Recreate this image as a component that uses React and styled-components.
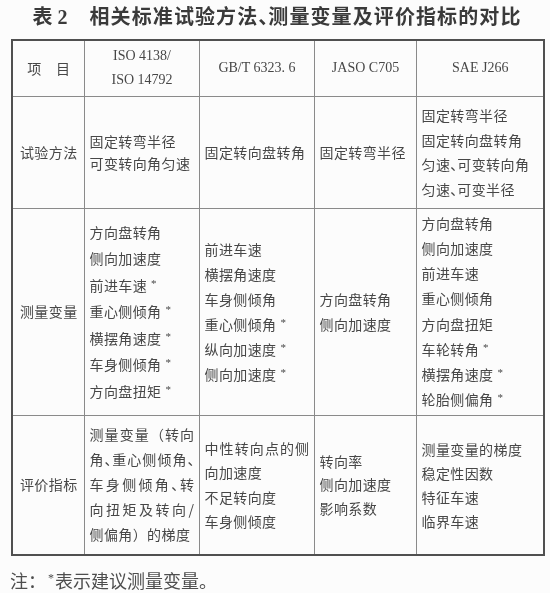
import React from "react"
import styled, { createGlobalStyle } from "styled-components"

const GlobalStyle = createGlobalStyle`
  html, body {
    margin: 0;
    background: #fcfcfa;
  }
  body {
    font-family: "Noto Sans CJK SC", sans-serif;
    color: #474747;
  }
`

// grayscale keeps sub-pixel text rendering from tinting single glyphs
const Page = styled.div`
  width: 550px;
  height: 593px;
  padding: 4px 7px 0 11px;
  box-sizing: border-box;
  background: #fcfcfa;
  filter: grayscale(1);
`

const Title = styled.h1`
  margin: 0 0 10px;
  font-size: 20px;
  line-height: 24px;
  font-weight: 700;
  color: #3a3a3a;
  text-align: center;
  letter-spacing: 1.1px;
`

const TableNo = styled.span`
  margin-right: 22px;
  letter-spacing: 0;
`

const Digit = styled.span`
  font-family: "Liberation Serif", serif;
  margin-left: 5px;
`

const Table = styled.table`
  width: 532px;
  table-layout: fixed;
  border-collapse: collapse;
  border: 2px solid #505050;
  font-size: 14px;
  letter-spacing: 0.4px;
`

const Row = styled.tr`
  height: ${props => props.$h}px;
`

const Cell = styled.td`
  border: 1px solid #8a8a8a;
  padding: 0 4px 0 5px;
  vertical-align: middle;
  text-align: ${props => (props.$center ? "center" : "left")};
  line-height: ${props => props.$lh || 25}px;
  white-space: nowrap;
`

const HeadLatin = styled.div`
  font-family: "Liberation Serif", serif;
  font-size: 14px;
  line-height: 24px;
  letter-spacing: 0;
`

const Line = styled.div`
  ${props =>
    props.$justify &&
    `
    white-space: normal;
    text-align: justify;
    text-align-last: justify;
  `}
`

const Half = styled.span`
  display: inline-block;
  width: 0.5em;
  overflow: hidden;
  vertical-align: top;
`

const Star = styled.span`
  position: relative;
  top: -4px;
  font-family: "Liberation Serif", serif;
  font-size: 11px;
  line-height: 0;
  margin-left: 4px;
`

const Note = styled.p`
  margin: 12px 0 0 -1px;
  font-size: 18px;
  line-height: 24px;
  color: #4e4e4e;
`

const NoteStar = styled.span`
  position: relative;
  top: -6px;
  font-family: "Liberation Serif", serif;
  font-size: 12px;
  line-height: 0;
  margin: 0 1px 0 2px;
`

// "、" is set half-width in the print, "*" marks suggested variables
const renderText = text => {
  const starred = text.endsWith("*")
  const body = starred ? text.slice(0, -1).trim() : text
  const parts = body.split("、")
  return (
    <>
      {parts.map((part, i) => (
        <React.Fragment key={i}>
          {part}
          {i < parts.length - 1 && <Half>、</Half>}
        </React.Fragment>
      ))}
      {starred && <Star>*</Star>}
    </>
  )
}

const rows = [
  {
    label: "试验方法",
    height: 112,
    cells: [
      { lh: 22, lines: ["固定转弯半径", "可变转向角匀速"] },
      { lines: ["固定转向盘转角"] },
      { lines: ["固定转弯半径"] },
      { lh: 24.5, lines: ["固定转弯半径", "固定转向盘转角", "匀速、可变转向角", "匀速、可变半径"] }
    ]
  },
  {
    label: "测量变量",
    height: 207,
    cells: [
      {
        lh: 26.5,
        lines: ["方向盘转角", "侧向加速度", "前进车速 *", "重心侧倾角 *", "横摆角速度 *", "车身侧倾角 *", "方向盘扭矩 *"]
      },
      { lines: ["前进车速", "横摆角速度", "车身侧倾角", "重心侧倾角 *", "纵向加速度 *", "侧向加速度 *"] },
      { lh: 24.5, lines: ["方向盘转角", "侧向加速度"] },
      {
        lh: 25.2,
        lines: ["方向盘转角", "侧向加速度", "前进车速", "重心侧倾角", "方向盘扭矩", "车轮转角 *", "横摆角速度 *", "轮胎侧偏角 *"]
      }
    ]
  },
  {
    label: "评价指标",
    height: 140,
    cells: [
      {
        lines: ["测量变量（转向", "角、重心侧倾角、", "车身侧倾角、转", "向扭矩及转向/", "侧偏角）的梯度"],
        justify: 4
      },
      { lh: 24.6, lines: ["中性转向点的侧", "向加速度", "不足转向度", "车身侧倾度"], justify: 1 },
      { lh: 23.5, lines: ["转向率", "侧向加速度", "影响系数"] },
      { lh: 24, lines: ["测量变量的梯度", "稳定性因数", "特征车速", "临界车速"] }
    ]
  }
]

export default function App() {
  return (
    <Page>
      <GlobalStyle />
      <Title>
        <TableNo>
          表<Digit>2</Digit>
        </TableNo>
        相关标准试验方法<Half>、</Half>测量变量及评价指标的对比
      </Title>
      <Table>
        <colgroup>
          <col style={{ width: 72 }} />
          <col style={{ width: 115 }} />
          <col style={{ width: 115 }} />
          <col style={{ width: 102 }} />
          <col style={{ width: 128 }} />
        </colgroup>
        <tbody>
          <Row $h={56}>
            <Cell $center>项　目</Cell>
            <Cell $center>
              <HeadLatin>ISO 4138/</HeadLatin>
              <HeadLatin>ISO 14792</HeadLatin>
            </Cell>
            <Cell $center>
              <HeadLatin>GB/T 6323. 6</HeadLatin>
            </Cell>
            <Cell $center>
              <HeadLatin>JASO C705</HeadLatin>
            </Cell>
            <Cell $center>
              <HeadLatin>SAE J266</HeadLatin>
            </Cell>
          </Row>
          {rows.map(row => (
            <Row key={row.label} $h={row.height}>
              <Cell $center>{row.label}</Cell>
              {row.cells.map((cell, i) => (
                <Cell key={i} $lh={cell.lh}>
                  {cell.lines.map((line, j) => (
                    <Line key={j} $justify={j < (cell.justify || 0)}>
                      {renderText(line)}
                    </Line>
                  ))}
                </Cell>
              ))}
            </Row>
          ))}
        </tbody>
      </Table>
      <Note>
        注：<NoteStar>*</NoteStar>表示建议测量变量。
      </Note>
    </Page>
  )
}
